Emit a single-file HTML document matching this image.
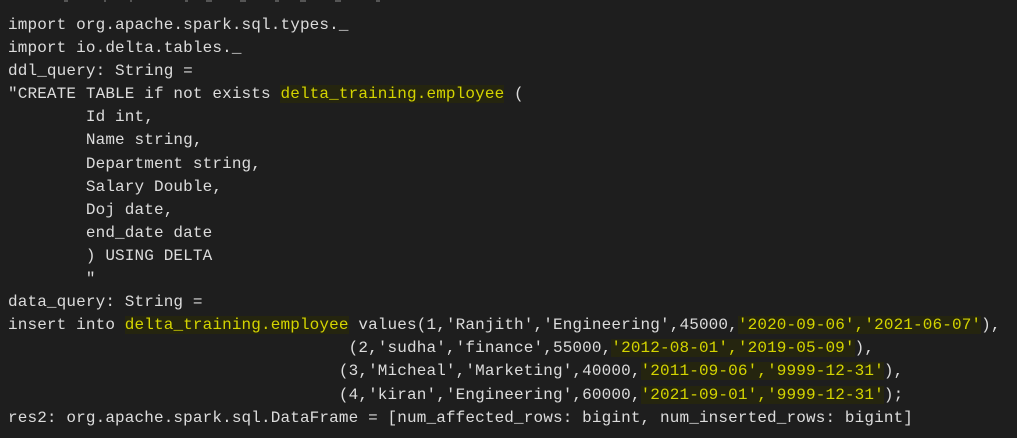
<!DOCTYPE html>
<html><head><meta charset="utf-8"><style>
html,body{margin:0;padding:0;background:#1e1e1e;width:1017px;height:438px;overflow:hidden}
pre{margin:0;position:absolute;left:8px;top:14px;font-family:"Liberation Mono",monospace;font-size:16px;letter-spacing:0.13px;line-height:23.1px;color:#dcdcdc;white-space:pre}
.h{color:#d4d400;background:#25250f}
.top{position:absolute;top:0;left:0;width:1017px;height:3px}
.top span{position:absolute;top:0;height:2px;width:4px;background:#555}
</style></head><body>
<div class="top"><span style="left:64px"></span><span style="left:104px;width:2px"></span><span style="left:130px;width:2px"></span><span style="left:185px;width:3px"></span><span style="left:206px;width:6px"></span><span style="left:240px;width:6px"></span><span style="left:275px"></span><span style="left:300px;width:6px"></span><span style="left:335px;width:6px"></span><span style="left:376px"></span></div>
<pre>import org.apache.spark.sql.types._
import io.delta.tables._
ddl_query: String =
"CREATE TABLE if not exists <span class="h">delta_training.employee</span> (
        Id int,
        Name string,
        Department string,
        Salary Double,
        Doj date,
        end_date date
        ) USING DELTA
        "
data_query: String =
insert into <span class="h">delta_training.employee</span> values(1,'Ranjith','Engineering',45000,<span class="h">'2020-09-06','2021-06-07'</span>),
                                   (2,'sudha','finance',55000,<span class="h">'2012-08-01','2019-05-09'</span>),
                                  (3,'Micheal','Marketing',40000,<span class="h">'2011-09-06','9999-12-31'</span>),
                                  (4,'kiran','Engineering',60000,<span class="h">'2021-09-01','9999-12-31'</span>);
res2: org.apache.spark.sql.DataFrame = [num_affected_rows: bigint, num_inserted_rows: bigint]</pre>
</body></html>
